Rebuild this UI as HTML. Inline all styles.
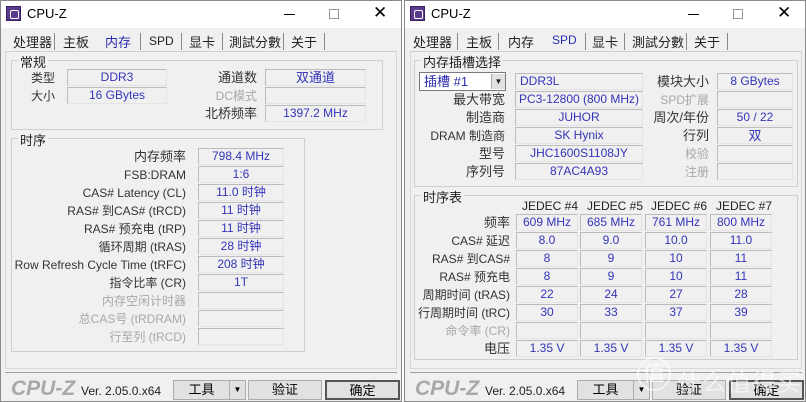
<!DOCTYPE html>
<html><head><meta charset="utf-8">
<style>
*{margin:0;padding:0;box-sizing:border-box}
body{width:806px;height:402px;background:#fff;position:relative;overflow:hidden;font-family:"Liberation Sans","Noto Sans CJK SC",sans-serif;font-size:12px;color:#222}
.w{position:absolute;top:0;width:402px;height:402px;border:1px solid #8a8a8a;background:#f0f0f0}
.tb{position:absolute;left:0;top:0;width:100%;height:27px;background:#fff}
.ic{position:absolute;left:5px;top:5px;width:15px;height:15px;background:#5a3a8c;border:1px solid #3a2060}
.ic:after{content:"";position:absolute;left:3px;top:3px;width:7px;height:7px;border:1px solid #fff;border-radius:2px}
.tt{position:absolute;left:26px;top:5px;font-size:13px;color:#000}
.mn{position:absolute;top:13px;width:11px;height:1px;background:#000}
.mx{position:absolute;top:8px;width:10px;height:10px;border:1px solid #999}
.cl{position:absolute;top:2px;font-size:17px;color:#000}
.a{position:absolute;white-space:nowrap}
.tab{position:absolute;top:31px;font-size:13px;color:#222}
.sep{position:absolute;top:32px;width:1px;height:17px;background:#888}
.pn{position:absolute;top:50px;border:1px solid #d8d8d8;border-top-color:#d0d0d0;background:#f0f0f0}
.g{position:absolute;border:1px solid #cfcfcf}
.gt{position:absolute;top:-9px;left:6px;background:#f0f0f0;padding:0 2px;font-size:13px;color:#222}
.f{position:absolute;height:17px;border:1px solid;border-color:#bcbcbc #e4e4e4 #e4e4e4 #bcbcbc;background:#f0f0f0;color:#3434b8;text-align:center;line-height:15px;font-size:12px;white-space:nowrap}
.l{position:absolute;text-align:right;white-space:nowrap;line-height:16px;color:#333}
.gr{color:#a8a8a8}
.btn{position:absolute;top:379px;height:20px;border:1px solid #adadad;background:#e1e1e1;text-align:center;line-height:18px;font-size:13px;color:#000}
.logo{position:absolute;top:376px;left:10px;font-size:21px;font-style:italic;font-weight:bold;color:#a8a8a8}
.ver{position:absolute;top:383px;left:80px;font-size:12px;color:#222}
.hl{position:absolute;top:371px;height:1px;background:#a0a0a0}
</style></head><body>

<!-- LEFT WINDOW -->
<div class="w" style="left:0">
<div class="tb"><div class="ic"></div><div class="tt">CPU-Z</div>
<div class="mn" style="left:283px"></div><div class="mx" style="left:328px"></div><div class="cl" style="left:372px">✕</div></div>
<div class="pn" style="left:4px;width:392px;height:318px"></div>
<div class="tab" style="left:12px">处理器</div><div class="sep" style="left:53px"></div>
<div class="tab" style="left:62px">主板</div>
<div class="tab" style="left:104px;top:31px;color:#2a2ab0">内存</div><div class="sep" style="left:139px"></div>
<div class="tab" style="left:148px;font-size:12px;top:33px">SPD</div><div class="sep" style="left:180px"></div>
<div class="tab" style="left:188px">显卡</div><div class="sep" style="left:221px"></div>
<div class="tab" style="left:228px">測試分數</div><div class="sep" style="left:282px"></div>
<div class="tab" style="left:290px">关于</div><div class="sep" style="left:323px"></div>

<div class="g" style="left:10px;top:59px;width:372px;height:70px"><div class="gt">常规</div></div>
<div class="l" style="left:0;width:54px;top:69px">类型</div><div class="f" style="left:66px;top:68px;width:100px">DDR3</div>
<div class="l" style="left:0;width:54px;top:87px">大小</div><div class="f" style="left:66px;top:86px;width:100px">16 GBytes</div>
<div class="l" style="left:150px;width:106px;top:69px;font-size:13px">通道数</div><div class="f" style="left:264px;top:68px;width:101px;font-size:13px">双通道</div>
<div class="l gr" style="left:150px;width:106px;top:87px">DC模式</div><div class="f" style="left:264px;top:86px;width:101px"></div>
<div class="l" style="left:150px;width:106px;top:105px;font-size:13px">北桥频率</div><div class="f" style="left:264px;top:104px;width:101px">1397.2 MHz</div>

<div class="g" style="left:10px;top:137px;width:294px;height:214px"><div class="gt">时序</div></div>
<div class="l" style="left:0;width:185px;top:148px;font-size:13px">内存频率</div><div class="f" style="left:197px;top:147px;width:86px">798.4 MHz</div>
<div class="l" style="left:0;width:185px;top:166px">FSB:DRAM</div><div class="f" style="left:197px;top:165px;width:86px">1:6</div>
<div class="l" style="left:0;width:185px;top:184px">CAS# Latency (CL)</div><div class="f" style="left:197px;top:183px;width:86px">11.0 时钟</div>
<div class="l" style="left:0;width:185px;top:202px">RAS# 到CAS# (tRCD)</div><div class="f" style="left:197px;top:201px;width:86px">11 时钟</div>
<div class="l" style="left:0;width:185px;top:220px">RAS# 预充电 (tRP)</div><div class="f" style="left:197px;top:219px;width:86px">11 时钟</div>
<div class="l" style="left:0;width:185px;top:238px">循环周期 (tRAS)</div><div class="f" style="left:197px;top:237px;width:86px">28 时钟</div>
<div class="l" style="left:0;width:185px;top:256px">Row Refresh Cycle Time (tRFC)</div><div class="f" style="left:197px;top:255px;width:86px">208 时钟</div>
<div class="l" style="left:0;width:185px;top:274px">指令比率 (CR)</div><div class="f" style="left:197px;top:273px;width:86px">1T</div>
<div class="l gr" style="left:0;width:185px;top:292px">内存空闲计时器</div><div class="f" style="left:197px;top:291px;width:86px"></div>
<div class="l gr" style="left:0;width:185px;top:310px">总CAS号 (tRDRAM)</div><div class="f" style="left:197px;top:309px;width:86px"></div>
<div class="l gr" style="left:0;width:185px;top:328px">行至列 (tRCD)</div><div class="f" style="left:197px;top:327px;width:86px"></div>

<div class="hl" style="left:4px;width:392px"></div>
<div class="logo">CPU-Z</div><div class="ver">Ver. 2.05.0.x64</div>
<div class="btn" style="left:172px;width:57px">工具</div><div class="btn" style="left:228px;width:17px;font-size:8px">▼</div>
<div class="btn" style="left:247px;width:74px">验证</div>
<div class="btn" style="left:324px;width:75px;border:2px solid #555">确定</div>
</div>

<!-- RIGHT WINDOW -->
<div class="w" style="left:404px">
<div class="tb"><div class="ic"></div><div class="tt">CPU-Z</div>
<div class="mn" style="left:283px"></div><div class="mx" style="left:328px"></div><div class="cl" style="left:372px">✕</div></div>
<div class="pn" style="left:5px;width:392px;height:318px"></div>
<div class="tab" style="left:8px">处理器</div><div class="sep" style="left:52px"></div>
<div class="tab" style="left:61px">主板</div><div class="sep" style="left:93px"></div>
<div class="tab" style="left:103px">内存</div>
<div class="tab" style="left:147px;font-size:12px;top:32px;color:#2a2ab0">SPD</div><div class="sep" style="left:180px"></div>
<div class="tab" style="left:187px">显卡</div><div class="sep" style="left:219px"></div>
<div class="tab" style="left:227px">測試分數</div><div class="sep" style="left:281px"></div>
<div class="tab" style="left:289px">关于</div><div class="sep" style="left:322px"></div>

<div class="g" style="left:9px;top:59px;width:384px;height:127px"><div class="gt">内存插槽选择</div></div>
<div class="a" style="left:14px;top:71px;width:87px;height:19px;background:#fff;border:1px solid #7a7a7a;color:#2a2ab0;font-size:13px;line-height:17px;padding-left:4px">插槽 #1</div>
<div class="a" style="left:86px;top:73px;width:14px;height:15px;background:#e1e1e1;border-left:1px solid #aaa;font-size:8px;text-align:center;line-height:15px">▼</div>
<div class="f" style="left:110px;top:72px;width:128px;text-align:left;padding-left:4px">DDR3L</div>
<div class="l" style="left:0;width:100px;top:91px;font-size:13px">最大带宽</div><div class="f" style="left:110px;top:90px;width:128px">PC3-12800 (800 MHz)</div>
<div class="l" style="left:0;width:100px;top:109px;font-size:13px">制造商</div><div class="f" style="left:110px;top:108px;width:128px">JUHOR</div>
<div class="l" style="left:0;width:100px;top:127px">DRAM 制造商</div><div class="f" style="left:110px;top:126px;width:128px">SK Hynix</div>
<div class="l" style="left:0;width:100px;top:145px;font-size:13px">型号</div><div class="f" style="left:110px;top:144px;width:128px">JHC1600S1108JY</div>
<div class="l" style="left:0;width:100px;top:163px;font-size:13px">序列号</div><div class="f" style="left:110px;top:162px;width:128px">87AC4A93</div>
<div class="l" style="left:200px;width:104px;top:73px;font-size:13px">模块大小</div><div class="f" style="left:312px;top:72px;width:76px">8 GBytes</div>
<div class="l gr" style="left:200px;width:104px;top:91px">SPD扩展</div><div class="f" style="left:312px;top:90px;width:76px"></div>
<div class="l" style="left:200px;width:104px;top:109px;font-size:13px">周次/年份</div><div class="f" style="left:312px;top:108px;width:76px">50 / 22</div>
<div class="l" style="left:200px;width:104px;top:127px;font-size:13px">行列</div><div class="f" style="left:312px;top:126px;width:76px;font-size:13px">双</div>
<div class="l gr" style="left:200px;width:104px;top:145px">校验</div><div class="f" style="left:312px;top:144px;width:76px"></div>
<div class="l gr" style="left:200px;width:104px;top:163px">注册</div><div class="f" style="left:312px;top:162px;width:76px"></div>

<div class="g" style="left:9px;top:194px;width:384px;height:165px"><div class="gt">时序表</div></div>
<div class="a" style="left:117px;top:198px">JEDEC #4</div><div class="a" style="left:182px;top:198px">JEDEC #5</div><div class="a" style="left:246px;top:198px">JEDEC #6</div><div class="a" style="left:311px;top:198px">JEDEC #7</div>

<div class="l" style="left:0;width:105px;top:214px;font-size:13px">频率</div>
<div class="f" style="left:111px;top:213px;width:62px">609 MHz</div><div class="f" style="left:175px;top:213px;width:62px">685 MHz</div><div class="f" style="left:240px;top:213px;width:62px">761 MHz</div><div class="f" style="left:305px;top:213px;width:62px">800 MHz</div>
<div class="l" style="left:0;width:105px;top:232px">CAS# 延迟</div>
<div class="f" style="left:111px;top:231px;width:62px">8.0</div><div class="f" style="left:175px;top:231px;width:62px">9.0</div><div class="f" style="left:240px;top:231px;width:62px">10.0</div><div class="f" style="left:305px;top:231px;width:62px">11.0</div>
<div class="l" style="left:0;width:105px;top:250px">RAS# 到CAS#</div>
<div class="f" style="left:111px;top:249px;width:62px">8</div><div class="f" style="left:175px;top:249px;width:62px">9</div><div class="f" style="left:240px;top:249px;width:62px">10</div><div class="f" style="left:305px;top:249px;width:62px">11</div>
<div class="l" style="left:0;width:105px;top:268px">RAS# 预充电</div>
<div class="f" style="left:111px;top:267px;width:62px">8</div><div class="f" style="left:175px;top:267px;width:62px">9</div><div class="f" style="left:240px;top:267px;width:62px">10</div><div class="f" style="left:305px;top:267px;width:62px">11</div>
<div class="l" style="left:0;width:105px;top:286px">周期时间 (tRAS)</div>
<div class="f" style="left:111px;top:285px;width:62px">22</div><div class="f" style="left:175px;top:285px;width:62px">24</div><div class="f" style="left:240px;top:285px;width:62px">27</div><div class="f" style="left:305px;top:285px;width:62px">28</div>
<div class="l" style="left:0;width:105px;top:304px">行周期时间 (tRC)</div>
<div class="f" style="left:111px;top:303px;width:62px">30</div><div class="f" style="left:175px;top:303px;width:62px">33</div><div class="f" style="left:240px;top:303px;width:62px">37</div><div class="f" style="left:305px;top:303px;width:62px">39</div>
<div class="l gr" style="left:0;width:105px;top:322px">命令率 (CR)</div>
<div class="f" style="left:111px;top:321px;width:62px"></div><div class="f" style="left:175px;top:321px;width:62px"></div><div class="f" style="left:240px;top:321px;width:62px"></div><div class="f" style="left:305px;top:321px;width:62px"></div>
<div class="l" style="left:0;width:105px;top:340px;font-size:13px">电压</div>
<div class="f" style="left:111px;top:339px;width:62px">1.35 V</div><div class="f" style="left:175px;top:339px;width:62px">1.35 V</div><div class="f" style="left:240px;top:339px;width:62px">1.35 V</div><div class="f" style="left:305px;top:339px;width:62px">1.35 V</div>

<div class="hl" style="left:5px;width:392px"></div>
<div class="logo">CPU-Z</div><div class="ver">Ver. 2.05.0.x64</div>
<div class="btn" style="left:172px;width:57px">工具</div><div class="btn" style="left:228px;width:17px;font-size:8px">▼</div>
<div class="btn" style="left:247px;width:74px">验证</div>
<div class="btn" style="left:324px;width:75px;border:2px solid #555">确定</div>
<div class="a" style="left:232px;top:356px;width:34px;height:34px;border-radius:50%;border:2px solid rgba(255,255,255,.6);color:rgba(255,255,255,.65);font-size:22px;text-align:center;line-height:30px">值</div>
<div class="a" style="left:272px;top:362px;font-size:24px;color:rgba(255,255,255,.6);letter-spacing:1px">什么值得买</div>
</div>
</body></html>
